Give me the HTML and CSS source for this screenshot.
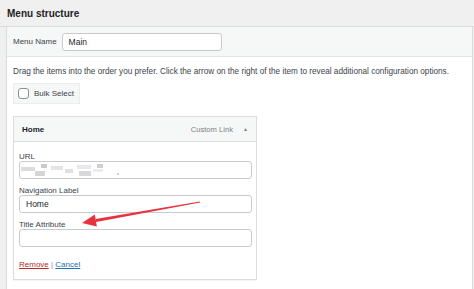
FILE: index.html
```html
<!DOCTYPE html>
<html>
<head>
<meta charset="utf-8">
<link rel="stylesheet" href="styles.css">
</head>
<body>
<div class="page">
  <div class="header">Menu structure</div>
  <div class="panel">
    <div class="name-row">
      <span class="label">Menu Name</span>
      <div class="input name-input">Main</div>
    </div>
    <div class="content">
      <p class="desc">Drag the items into the order you prefer. Click the arrow on the right of the item to reveal additional configuration options.</p>
      <div class="bulk"><span class="check"></span><span>Bulk Select</span></div>
      <div class="item">
        <div class="item-head">
          <span class="item-title">Home</span>
          <span class="item-type">Custom Link <span class="caret">&#9650;</span></span>
        </div>
        <div class="item-body">
          <div class="field">
            <span class="flabel">URL</span>
            <div class="input wide">
              <svg class="blur" width="110" height="14" viewBox="0 0 110 14">
                <rect x="0" y="4" width="14" height="4" fill="#dcdcde"/>
                <rect x="20" y="1" width="6" height="4" fill="#c9cacc"/>
                <rect x="14" y="8" width="10" height="5" fill="#d4d5d7"/>
                <rect x="30" y="3" width="12" height="4" fill="#e4e4e6"/>
                <rect x="44" y="6" width="8" height="4" fill="#e0e0e2"/>
                <rect x="56" y="2" width="14" height="4" fill="#e8e8ea"/>
                <rect x="58" y="8" width="12" height="5" fill="#d8d8da"/>
                <rect x="76" y="1" width="6" height="4" fill="#cfd0d2"/>
                <rect x="72" y="6" width="10" height="3" fill="#ececee"/>
                <rect x="96" y="10" width="2" height="2" fill="#d0d0d2"/>
              </svg>
            </div>
          </div>
          <div class="field">
            <span class="flabel">Navigation Label</span>
            <div class="input wide">Home</div>
          </div>
          <div class="field">
            <span class="flabel">Title Attribute</span>
            <div class="input wide"></div>
          </div>
          <div class="actions"><a class="remove">Remove</a> <span class="sep">|</span> <a class="cancel">Cancel</a></div>
        </div>
      </div>
    </div>
  </div>
  <svg class="arrow" width="474" height="289" viewBox="0 0 474 289">
    <polygon points="200.1,202.6 199.9,201.4 95.5,219 96.1,222" fill="#e8323f"/>
    <polygon points="82,223 94.8,214.4 96.9,226.6" fill="#e8323f"/>
  </svg>
</div>
</body>
</html>
```
FILE: styles.css
```css
* { box-sizing: border-box; }
html, body { margin: 0; padding: 0; }
body {
  width: 474px;
  height: 289px;
  overflow: hidden;
  background: #f0f0f1;
  font-family: "Liberation Sans", Arial, sans-serif;
  color: #3c434a;
}
.page {
  position: relative;
  width: 474px;
  height: 289px;
  display: flex;
  flex-direction: column;
}
.header {
  height: 27px;
  flex: none;
  padding-left: 7px;
  display: flex;
  align-items: center;
  font-size: 10px;
  font-weight: bold;
  color: #1d2327;
  border-bottom: 1px solid #dcdcde;
}
.panel {
  flex: 1;
  margin-left: 6px;
  width: 467px;
  background: #fff;
  border-left: 1px solid #dcdcde;
  border-right: 1px solid #dcdcde;
}
.name-row {
  height: 30px;
  background: #f6f7f7;
  border-bottom: 1px solid #e2e3e5;
  display: flex;
  align-items: center;
  padding-left: 6px;
  gap: 5px;
}
.label { font-size: 8px; color: #3c434a; }
.input {
  height: 18px;
  border: 1px solid #c9cacd;
  border-radius: 3px;
  background: #fff;
  display: flex;
  align-items: center;
  padding-left: 6px;
  font-size: 8.5px;
  color: #1d2327;
}
.name-input { width: 160px; }
.content { padding: 10px 0 0 6px; }
.desc {
  margin: 0;
  font-size: 8.2px;
  line-height: 10px;
  color: #3c434a;
}
.bulk {
  margin-top: 6px;
  width: 67px;
  height: 21px;
  background: #f6f7f7;
  border: 1px solid #ececee;
  display: flex;
  align-items: center;
  padding-left: 4px;
  gap: 5px;
  font-size: 8px;
  color: #3c434a;
}
.check {
  width: 11px;
  height: 11px;
  border: 1px solid #8c8f94;
  border-radius: 3px;
  background: #fff;
}
.item {
  margin-top: 12px;
  width: 244px;
  height: 164px;
  border: 1px solid #dcdcde;
  background: #fff;
  box-shadow: 0 1px 1px rgba(0,0,0,0.04);
}
.item-head {
  height: 25px;
  background: #f6f7f7;
  border-bottom: 1px solid #dcdcde;
  display: flex;
  align-items: center;
  justify-content: space-between;
  padding: 0 8px 0 8px;
}
.item-title { font-size: 8px; font-weight: bold; color: #1d2327; }
.item-type { font-size: 7.6px; color: #7d7f83; }
.caret { font-size: 5px; margin-left: 8px; vertical-align: 1px; }
.item-body { padding: 10px 5px 0 5px; }
.field { display: flex; flex-direction: column; margin-bottom: 7px; }
.flabel { font-size: 8px; line-height: 9px; color: #3c434a; }
.wide { width: 233px; }
.blur { margin-left: -5px; }
.actions {
  margin-top: 13px;
  font-size: 8px;
  line-height: 10px;
  color: #3c434a;
}
.remove { color: #b32d2e; text-decoration: underline; }
.cancel { color: #2271b1; text-decoration: underline; }
.sep { color: #8c8f94; }
.arrow { position: absolute; left: 0; top: 0; pointer-events: none; }
```
